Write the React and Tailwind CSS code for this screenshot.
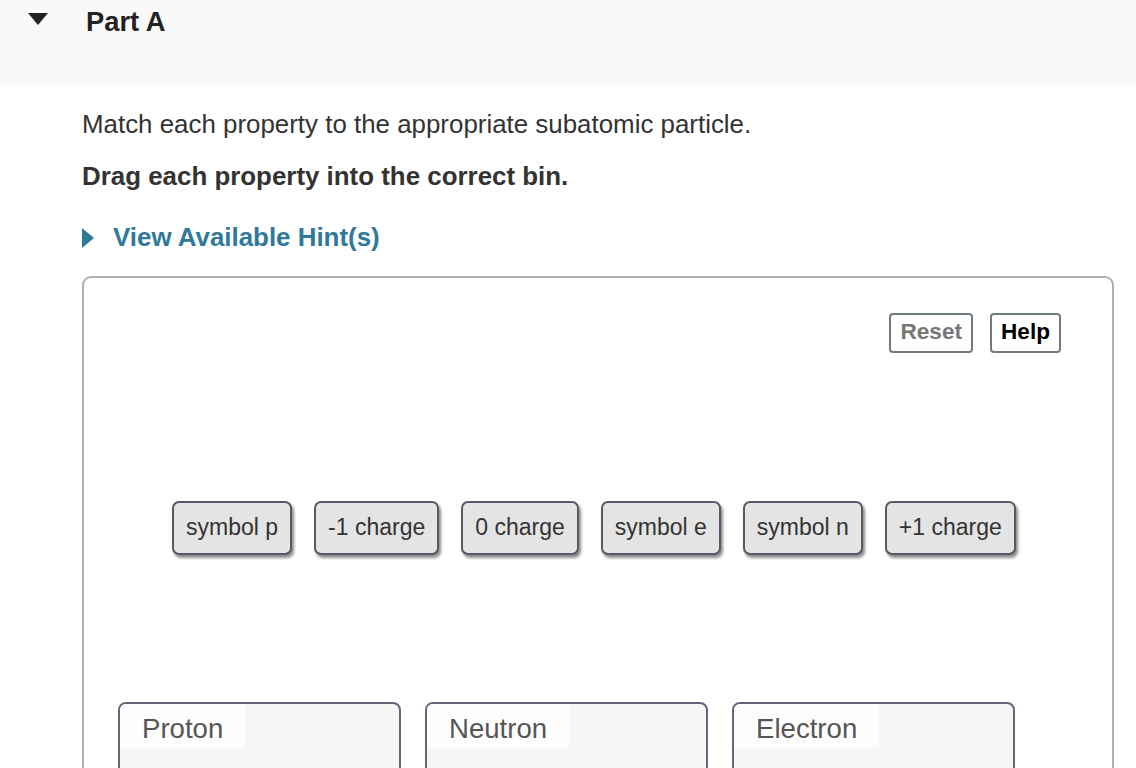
const CHIPS = ['symbol p', '-1 charge', '0 charge', 'symbol e', 'symbol n', '+1 charge'];
const BINS = ['Proton', 'Neutron', 'Electron'];

export default function App() {
  return (
    <div
      className="w-[1136px] h-[768px] overflow-hidden bg-white text-[#333]"
      style={{ fontFamily: '"Liberation Sans", Arial, Helvetica, sans-serif' }}
    >
      {/* Part header */}
      <div className="h-[87px] bg-[#f9f9f9] flex items-start pt-[8px]">
        <div className="w-[86px] flex pl-[28px] pt-[5px]">
          <svg width="20" height="13" viewBox="0 0 20 13">
            <polygon points="0,0 20,0 10,12" fill="#222" />
          </svg>
        </div>
        <h2 className="text-[27.3px] leading-none font-bold text-[#222]">Part A</h2>
      </div>

      {/* Question body */}
      <div className="pl-[82px] pr-[22px]">
        <p className="mt-[25px] text-[25.9px] leading-none">
          Match each property to the appropriate subatomic particle.
        </p>
        <p className="mt-[26px] text-[25.9px] leading-none font-bold">
          Drag each property into the correct bin.
        </p>
        <div className="mt-[35px] flex items-center text-[#2f7a9b]">
          <svg width="12" height="20" viewBox="0 0 12 20" className="mr-[19px] mt-[1px]">
            <polygon points="0,0 12,10 0,20" fill="#2f7a9b" />
          </svg>
          <span className="text-[25.9px] leading-none font-bold">View Available Hint(s)</span>
        </div>

        {/* Drag and drop box */}
        <div className="mt-[25px] border-2 border-[#b0b0b0] rounded-[9px] h-[600px]">
          <div className="flex justify-end gap-[17px] pt-[35px] pr-[51px]">
            <button className="h-[40px] px-[9px] border-2 border-[#6f7b80] rounded-[4px] bg-white text-[22.6px] leading-none font-bold text-[#777]">
              Reset
            </button>
            <button className="h-[40px] px-[9px] border-2 border-[#6f7b80] rounded-[4px] bg-white text-[22.6px] leading-none font-bold text-black">
              Help
            </button>
          </div>

          <div className="flex gap-[22px] pl-[88px] mt-[148px]">
            {CHIPS.map((c) => (
              <div
                key={c}
                className="h-[54px] flex items-center px-[12px] border-2 border-[#585868] rounded-[7px] bg-[#e4e4e4] text-[23px] text-[#333] shadow-[2px_3px_3px_rgba(0,0,0,0.45)]"
              >
                {c}
              </div>
            ))}
          </div>

          <div className="flex gap-[24px] pl-[34px] mt-[147px]">
            {BINS.map((b) => (
              <div
                key={b}
                className="w-[283px] h-[200px] border-2 border-[#66667a] rounded-t-[8px] bg-[#f6f6f6]"
              >
                <div className="inline-flex items-center h-[44px] pt-[6px] px-[22px] bg-[#fdfdfd] text-[27.6px] leading-none text-[#555] rounded-tl-[6px]">
                  {b}
                </div>
              </div>
            ))}
          </div>
        </div>
      </div>
    </div>
  );
}
